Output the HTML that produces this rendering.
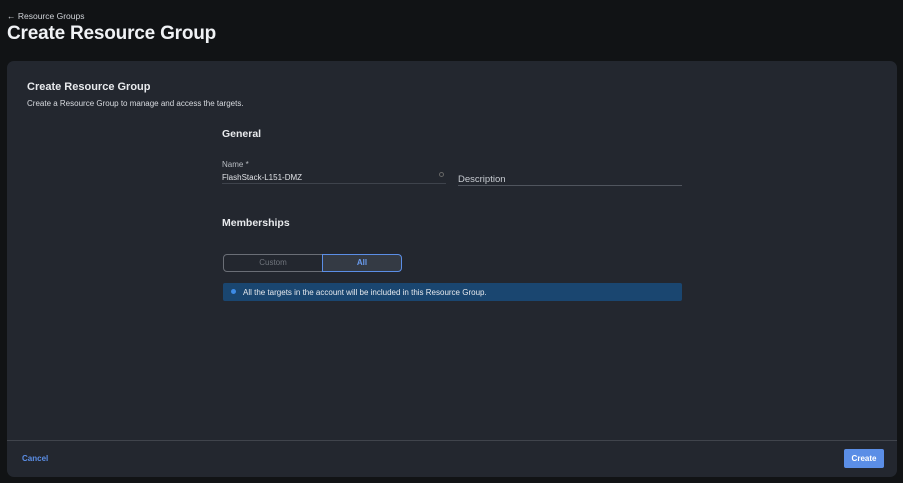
<!DOCTYPE html>
<html><head><style>
*{margin:0;padding:0;box-sizing:border-box}
body{width:903px;height:483px;background:#111315;font-family:"Liberation Sans",sans-serif;color:#e8eaed;position:relative;overflow:hidden}
.abs{position:absolute}
.panel{left:7px;top:61px;width:890px;height:416px;background:#23272f;border-radius:7px}
</style></head><body>
<div class="abs" style="left:7px;top:11px;font-size:8.5px;color:#d0d3d8">← Resource Groups</div>
<div class="abs" style="left:7px;top:23px;font-size:19px;font-weight:bold;color:#f0f2f5;letter-spacing:-0.2px">Create Resource Group</div>
<div class="abs panel"></div>
<div class="abs" style="left:27px;top:81px;font-size:11px;font-weight:bold">Create Resource Group</div>
<div class="abs" style="left:27px;top:99px;font-size:8px;color:#d8dbe0">Create a Resource Group to manage and access the targets.</div>
<div class="abs" style="left:222px;top:128px;font-size:10.5px;font-weight:bold">General</div>
<div class="abs" style="left:222px;top:160px;font-size:8px;color:#b8bcc2">Name *</div>
<div class="abs" style="left:222px;top:173px;font-size:8px;color:#e0e2e6">FlashStack-L151-DMZ</div>
<div class="abs" style="left:439px;top:172px;width:5px;height:5px;border:1px solid #666;border-radius:50%"></div>
<div class="abs" style="left:222px;top:183px;width:224px;height:1px;background:#3e434c"></div>
<div class="abs" style="left:458px;top:174px;font-size:9.5px;color:#c8ccd2">Description</div>
<div class="abs" style="left:458px;top:185px;width:224px;height:1px;background:#50555e"></div>
<div class="abs" style="left:222px;top:217px;font-size:10.5px;font-weight:bold">Memberships</div>
<div class="abs" style="left:223px;top:254px;width:100px;height:18px;border:1px solid #6a6e76;border-radius:4px 0 0 4px;font-size:8px;color:#6f747c;text-align:center;line-height:16px">Custom</div>
<div class="abs" style="left:322px;top:254px;width:80px;height:18px;border:1px solid #5b8ee6;border-radius:0 4px 4px 0;background:#343a44;font-size:8px;color:#6a9cf0;text-align:center;line-height:16px;font-weight:bold">All</div>
<div class="abs" style="left:223px;top:283px;width:459px;height:18px;background:#1a4670;border-radius:2px"></div>
<div class="abs" style="left:231px;top:289px;width:5px;height:5px;border-radius:50%;background:#3d8be6"></div>
<div class="abs" style="left:243px;top:288px;font-size:8px;color:#e6e9ee">All the targets in the account will be included in this Resource Group.</div>
<div class="abs" style="left:7px;top:440px;width:890px;height:1px;background:#40444c"></div>
<div class="abs" style="left:22px;top:454px;font-size:8px;color:#5b8ee6;font-weight:bold">Cancel</div>
<div class="abs" style="left:844px;top:449px;width:40px;height:19px;background:#5b8ee6;border-radius:2px;font-size:8px;color:#fff;font-weight:bold;text-align:center;line-height:19px">Create</div>
</body></html>
